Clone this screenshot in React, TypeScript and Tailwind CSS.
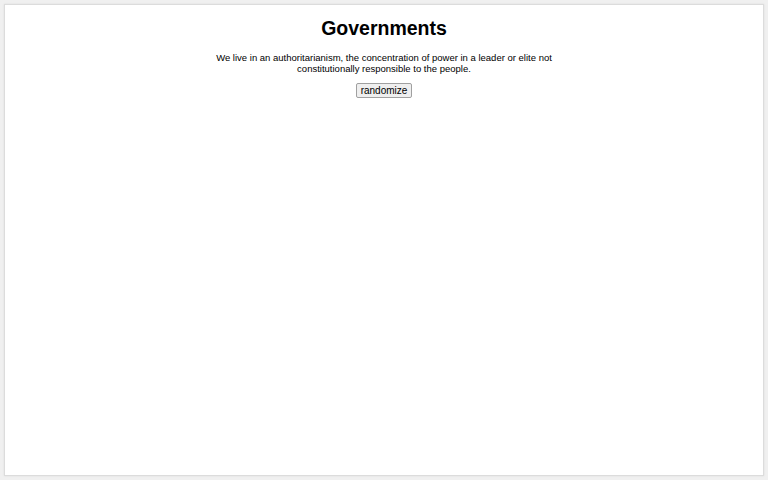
const App = () => {
  return (
    <div className="h-screen w-full bg-[#f0f0f0] p-[4px] font-['Liberation_Sans',Arial,sans-serif] text-black">
      <div className="flex h-full flex-col items-center border border-[#dcdcdc] bg-white pt-[12px] shadow-[0_0_2px_rgba(0,0,0,0.08)]">
        <h1 className="text-[19.5px] font-bold leading-[23px]">Governments</h1>
        <p className="mt-[12px] w-[360px] text-center text-[9.5px] leading-[11px]">
          We live in an authoritarianism, the concentration of power in a leader or elite not constitutionally responsible to the people.
        </p>
        <button className="mt-[9px] rounded-[2px] border border-[#a0a0a0] bg-[#efefef] px-[4px] text-[10px] leading-[13px]">
          randomize
        </button>
      </div>
    </div>
  )
}

export default App
